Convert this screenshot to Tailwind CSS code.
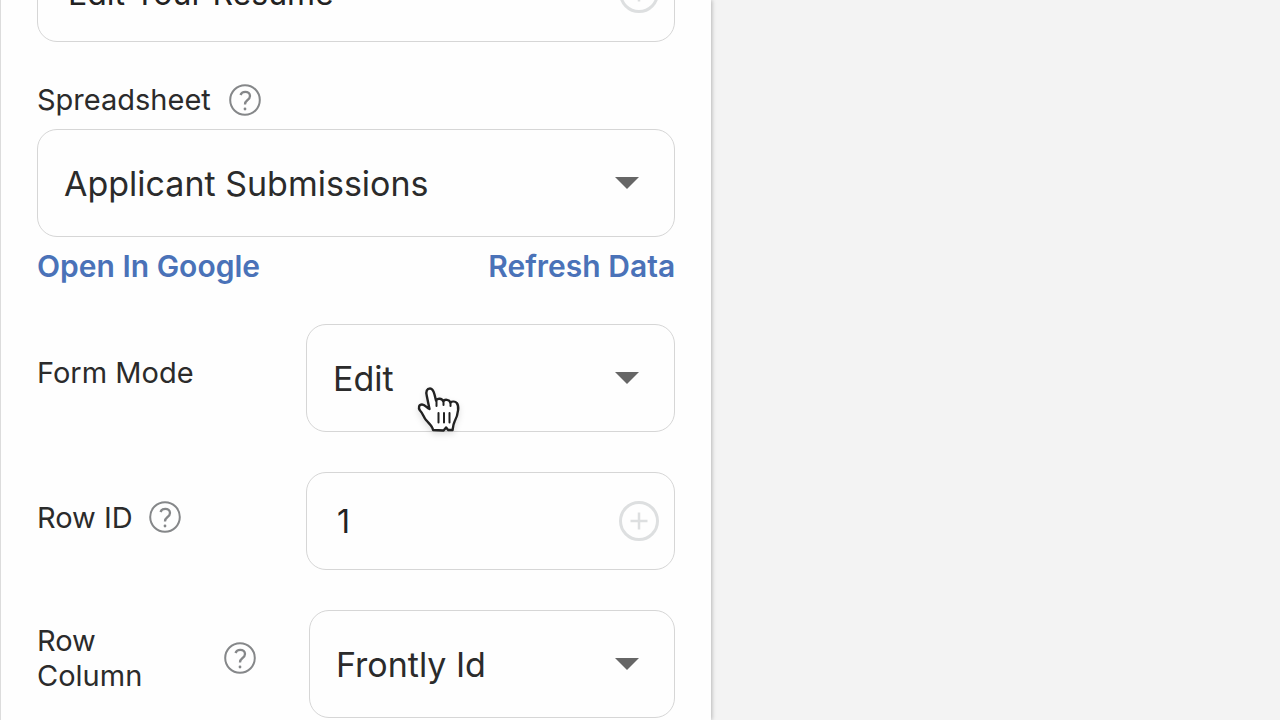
<!DOCTYPE html>
<html lang="en">
<head>
  <meta charset="UTF-8">
  <meta name="viewport" content="width=device-width, initial-scale=1.0">
  <title>Form Settings</title>
  <!-- TailwindCSS CDN -->
  <script src="https://cdn.jsdelivr.net/npm/@tailwindcss/browser@4"></script>
</head>
<body class="bg-[#f3f3f3] font-[Inter,'Liberation_Sans',sans-serif] text-[#2b2b2b]">

  <div class="grid grid-cols-[5fr_4fr] h-screen overflow-hidden">

    <!-- Settings panel, scrolled part of the way down -->
    <aside class="bg-[#fefefe] border-l border-[#dcdcdc] px-9 shadow-[1px_0_4px_rgba(0,0,0,0.25)]">
      <form class="-mt-14 text-[29px] leading-[35px]">

        <!-- Title -->
        <div class="relative">
          <input type="text" aria-label="Title" value="Edit Your Resume" class="block w-full h-[98px] pl-[30px] pr-20 border border-[#d6d6d6] rounded-[20px] bg-[#fefefe] text-[32px] text-[#222222]">
          <button type="button" aria-label="Insert value" class="absolute right-4 inset-y-0 my-auto size-10 text-[#dddfe0]">
            <svg viewBox="0 0 40 40" fill="none" stroke="currentColor" stroke-width="3" class="size-10">
              <circle cx="20" cy="20" r="18.5" />
              <path d="M20 11.500v17M11.500 20h17" stroke-width="2.500" />
            </svg>
          </button>
        </div>

        <!-- Spreadsheet -->
        <div class="mt-10 mb-3 flex items-center gap-[18px]">
          <label for="spreadsheet">Spreadsheet</label>
          <svg viewBox="0 0 32 32" fill="none" stroke="#858789" stroke-width="2" class="size-8">
            <circle cx="16" cy="16" r="14.800" />
            <path d="M11.500 11c.8-2.300 2.600-3.200 4.700-3.200 2.700 0 4.800 1.600 4.800 4.200 0 2.200-1.300 3.200-2.700 4.200-1.500 1.100-2.300 1.900-2.300 4.300" stroke-width="2.300" />
            <circle cx="16" cy="25" r="1.400" fill="#858789" stroke="none" />
          </svg>
        </div>
        <div class="relative">
          <select id="spreadsheet" class="block w-full h-[108px] px-[26px] border border-[#d6d6d6] rounded-[20px] bg-[#fefefe] appearance-none text-[34px] leading-normal text-[#2b2b2b]">
            <option>Applicant Submissions</option>
          </select>
          <svg viewBox="0 0 24 12" fill="#666666" class="absolute right-9 inset-y-0 my-auto w-6 h-3 pointer-events-none">
            <path d="M0 0h24L12 12z" />
          </svg>
        </div>
        <div class="pt-3 flex justify-between text-[30px] font-semibold text-[#4a72b8]">
          <a href="#">Open In Google</a>
          <a href="#">Refresh Data</a>
        </div>

        <!-- Form mode -->
        <div class="mt-10 grid grid-cols-[269px_1fr] items-center">
          <label for="form-mode" class="pb-3">Form Mode</label>
          <div class="relative">
            <select id="form-mode" class="block w-full h-[108px] px-[26px] border border-[#d6d6d6] rounded-[20px] bg-[#fefefe] appearance-none text-[34px] leading-normal text-[#2b2b2b] cursor-pointer">
              <option>Edit</option>
            </select>
            <svg viewBox="0 0 24 12" fill="#666666" class="absolute right-9 inset-y-0 my-auto w-6 h-3 pointer-events-none">
              <path d="M0 0h24L12 12z" />
            </svg>
            <!-- Hand pointer -->
            <svg viewBox="0 0 46 50" fill="white" stroke="#222222" stroke-width="2.400" stroke-linejoin="round" stroke-linecap="round" class="absolute left-[110px] top-[61px] w-[46px] h-[50px] drop-shadow-md pointer-events-none">
              <path d="M17 45c-.3-4-4-6.500-7-10-2.500-3-3-6.500-6-9.500-2-3-1-6 2-6 3 0 4.500 3 7.500 4.500L10.800 11C9.500 6.500 11 3.500 14 3.500c2.500 0 3.600 2.500 4.500 6l1.500 6c1-2.500 6-2.500 7.300.8 1.200-2.300 6-2 7 1.200 2-1.500 5-1 6.500.5 1.500 2 1.700 4 1.300 7-.5 5-1.500 8-3.500 11.500-1.500 3-1.600 5-2 8.500h-4.500l-2-2.500-2.500 3z" />
              <path d="M20.500 16v5M27.500 16.500v3.500M34.500 17.500v3.500M22.500 28v9.500M28 28v9.500M33.500 28v9.500" stroke-width="2" />
            </svg>
          </div>
        </div>

        <!-- Row ID -->
        <div class="mt-10 grid grid-cols-[269px_1fr] items-center">
          <div class="pb-2 flex items-center gap-4">
            <label for="row-id">Row ID</label>
            <svg viewBox="0 0 32 32" fill="none" stroke="#858789" stroke-width="2" class="size-8">
              <circle cx="16" cy="16" r="14.800" />
              <path d="M11.500 11c.8-2.300 2.600-3.200 4.700-3.200 2.700 0 4.800 1.600 4.800 4.200 0 2.200-1.300 3.200-2.700 4.200-1.500 1.100-2.300 1.900-2.300 4.300" stroke-width="2.300" />
              <circle cx="16" cy="25" r="1.400" fill="#858789" stroke="none" />
            </svg>
          </div>
          <div class="relative">
            <input id="row-id" type="text" value="1" class="block w-full h-[98px] pl-[30px] pr-20 border border-[#d6d6d6] rounded-[20px] bg-[#fefefe] text-[32px] text-[#222222]">
            <button type="button" aria-label="Insert value" class="absolute right-4 inset-y-0 my-auto size-10 text-[#dddfe0]">
              <svg viewBox="0 0 40 40" fill="none" stroke="currentColor" stroke-width="3" class="size-10">
                <circle cx="20" cy="20" r="18.5" />
                <path d="M20 11.500v17M11.500 20h17" stroke-width="2.500" />
              </svg>
            </button>
          </div>
        </div>

        <!-- Row column -->
        <div class="mt-10 grid grid-cols-[272px_1fr] items-center">
          <div class="pb-3 pr-[53px] flex items-center justify-between">
            <label for="row-column" class="w-min">Row Column</label>
            <svg viewBox="0 0 32 32" fill="none" stroke="#858789" stroke-width="2" class="size-8">
              <circle cx="16" cy="16" r="14.800" />
              <path d="M11.500 11c.8-2.300 2.600-3.200 4.700-3.200 2.700 0 4.800 1.600 4.800 4.200 0 2.200-1.300 3.200-2.700 4.200-1.500 1.100-2.300 1.900-2.300 4.300" stroke-width="2.300" />
              <circle cx="16" cy="25" r="1.400" fill="#858789" stroke="none" />
            </svg>
          </div>
          <div class="relative">
            <select id="row-column" class="block w-full h-[108px] px-[26px] border border-[#d6d6d6] rounded-[20px] bg-[#fefefe] appearance-none text-[34px] leading-normal text-[#2b2b2b]">
              <option>Frontly Id</option>
            </select>
            <svg viewBox="0 0 24 12" fill="#666666" class="absolute right-9 inset-y-0 my-auto w-6 h-3 pointer-events-none">
              <path d="M0 0h24L12 12z" />
            </svg>
          </div>
        </div>

      </form>
    </aside>

    <!-- Preview area -->
    <main></main>
  </div>

</body>
</html>
